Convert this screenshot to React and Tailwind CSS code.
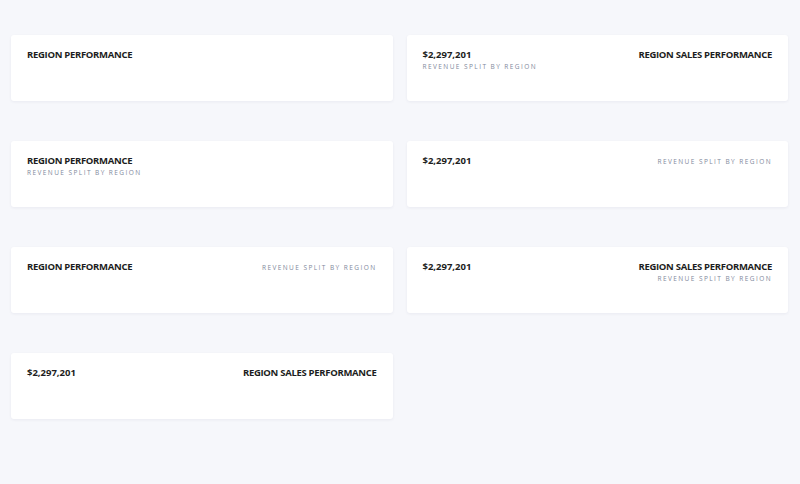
const font = { fontFamily: '"Open Sans", "Liberation Sans", sans-serif' };

function Title({ children, amount }) {
  return (
    <div
      className={
        amount
          ? "text-[9.5px] leading-[14px] font-bold text-[#1c1d21] whitespace-nowrap"
          : "text-[9.5px] leading-[14px] font-bold tracking-[-0.3px] text-[#1c1d21] whitespace-nowrap"
      }
    >
      {children}
    </div>
  );
}

function Sub({ children }) {
  return (
    <div className="text-[6.5px] leading-[9px] tracking-[0.22em] text-[#7f899c] whitespace-nowrap">
      {children}
    </div>
  );
}

function Card({ children }) {
  return (
    <div className="h-[66px] bg-white rounded-[3px] shadow-[0_1px_3px_rgba(30,40,80,0.06)] px-4 pt-[13px]">
      {children}
    </div>
  );
}

export default function App() {
  return (
    <div className="min-h-screen bg-[#f6f7fb] pt-[35px] pl-[11px] pr-[12px]" style={font}>
      <div className="grid grid-cols-2 gap-x-[14px] gap-y-[40px]">
        <Card>
          <Title>REGION PERFORMANCE</Title>
        </Card>

        <Card>
          <div className="flex justify-between items-start">
            <div>
              <Title amount>$2,297,201</Title>
              <Sub>REVENUE SPLIT BY REGION</Sub>
            </div>
            <Title>REGION SALES PERFORMANCE</Title>
          </div>
        </Card>

        <Card>
          <Title>REGION PERFORMANCE</Title>
          <Sub>REVENUE SPLIT BY REGION</Sub>
        </Card>

        <Card>
          <div className="flex justify-between items-baseline">
            <Title amount>$2,297,201</Title>
            <Sub>REVENUE SPLIT BY REGION</Sub>
          </div>
        </Card>

        <Card>
          <div className="flex justify-between items-baseline">
            <Title>REGION PERFORMANCE</Title>
            <Sub>REVENUE SPLIT BY REGION</Sub>
          </div>
        </Card>

        <Card>
          <div className="flex justify-between items-start">
            <Title amount>$2,297,201</Title>
            <div className="text-right">
              <Title>REGION SALES PERFORMANCE</Title>
              <Sub>REVENUE SPLIT BY REGION</Sub>
            </div>
          </div>
        </Card>

        <Card>
          <div className="flex justify-between items-start">
            <Title amount>$2,297,201</Title>
            <Title>REGION SALES PERFORMANCE</Title>
          </div>
        </Card>
      </div>
    </div>
  );
}
